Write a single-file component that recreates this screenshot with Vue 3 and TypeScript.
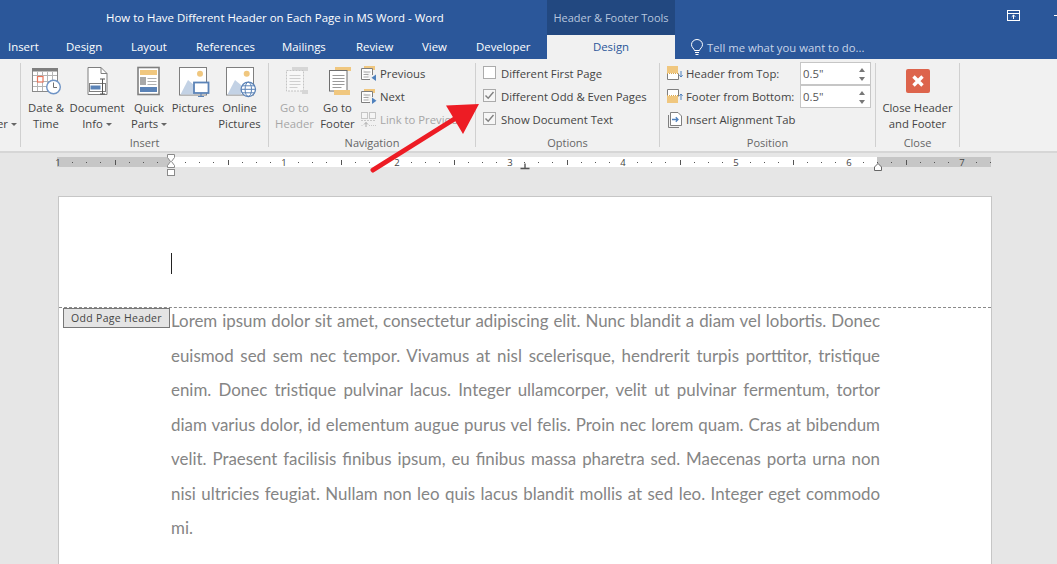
<script setup lang="ts">
const tabs: string[] = ['Insert', 'Design', 'Layout', 'References', 'Mailings', 'Review', 'View', 'Developer']

const INCH = 113
const ORIGIN = 171
interface Tick { x: number; kind: 'dot' | 'tall' | 'num'; label: string }
const ticks: Tick[] = []
for (let i = -8; i <= 58; i++) {
  if (i === 0) continue
  const x = ORIGIN + (i * INCH) / 8
  if (i % 8 === 0) ticks.push({ x, kind: 'num', label: String(Math.abs(i / 8)) })
  else if (i % 4 === 0) ticks.push({ x, kind: 'tall', label: '' })
  else ticks.push({ x, kind: 'dot', label: '' })
}

const lines: string[] = [
  'Lorem ipsum dolor sit amet, consectetur adipiscing elit. Nunc blandit a diam vel lobortis. Donec',
  'euismod sed sem nec tempor. Vivamus at nisl scelerisque, hendrerit turpis porttitor, tristique',
  'enim. Donec tristique pulvinar lacus. Integer ullamcorper, velit ut pulvinar fermentum, tortor',
  'diam varius dolor, id elementum augue purus vel felis. Proin nec lorem quam. Cras at bibendum',
  'velit. Praesent facilisis finibus ipsum, eu finibus massa pharetra sed. Maecenas porta urna non',
  'nisi ultricies feugiat. Nullam non leo quis lacus blandit mollis at sed leo. Integer eget commodo',
]
</script>

<template>
  <div class="app">
    <header class="titlebar">
      <div class="title">How to Have Different Header on Each Page in MS Word - Word</div>
      <div class="context">Header &amp; Footer Tools</div>
      <svg class="restore" width="14" height="12" viewBox="0 0 14 12">
        <rect x="0.5" y="0.5" width="12" height="10" fill="none" stroke="#fff" />
        <path d="M0 3.5H13M6.5 9V5M4.7 6.8L6.5 5L8.3 6.8" fill="none" stroke="#fff" />
      </svg>
      <div class="min"></div>
    </header>

    <nav class="tabs">
      <div v-for="t in tabs" :key="t" class="tab">{{ t }}</div>
      <div class="tab active">Design</div>
      <div class="tell">
        <svg width="14" height="17" viewBox="0 0 14 17">
          <path d="M4.5 11.5C4.2 9.5 1.5 8.5 1.5 5.7a5.3 5 0 0 1 11 0c0 2.8-2.7 3.8-3 5.8z" fill="none" stroke="#fff" />
          <path d="M5 13.5h4M5.5 15.5h3" stroke="#fff" />
        </svg>
        <span>Tell me what you want to do...</span>
      </div>
      <div class="tab">Si</div>
    </nav>

    <section class="ribbon">
      <div class="group g-cut">
        <div class="body cut-body"><span class="lbl">er<i class="caret"></i></span></div>
      </div>

      <div class="group g-insert">
        <div class="body large-grid">
          <div class="large">
            <svg class="ico" width="36" height="36" viewBox="0 0 36 36">
              <rect x="4.5" y="4.5" width="25" height="23" fill="#fff" stroke="#8a8a8a" />
              <rect x="4" y="4" width="26" height="3.5" fill="#7f7f7f" />
              <path d="M9.5 8v19M14.5 8v19M19.5 8v19M24.5 8v19M5 11.5h24M5 17.5h24M5 22.5h24" stroke="#b5b5b5" fill="none" />
              <rect x="9.5" y="12.5" width="5.5" height="5.5" fill="#fff" stroke="#e8745a" stroke-width="1.2" />
              <circle cx="25.5" cy="23" r="6.8" fill="#fff" stroke="#6f94c6" stroke-width="1.4" />
              <path d="M25.5 18.5V23.5H29" fill="none" stroke="#707070" />
            </svg>
            <span class="lbl">Date &amp;<br />Time</span>
          </div>
          <div class="large">
            <svg class="ico" width="36" height="36" viewBox="0 0 36 36">
              <path d="M9 3.5H22L28 9.5V30.5H9z" fill="#fff" stroke="#7f7f7f" />
              <path d="M22 3.5V9.5H28" fill="none" stroke="#7f7f7f" />
              <rect x="10.5" y="19.5" width="16" height="8" fill="#fff" stroke="#7f7f7f" />
              <rect x="11.5" y="21.5" width="10" height="4" fill="#5b83b7" />
              <path d="M21 15h5M23.5 15v15M21 30h5" fill="none" stroke="#555" />
            </svg>
            <span class="lbl">Document<br />Info<i class="caret"></i></span>
          </div>
          <div class="large">
            <svg class="ico" width="36" height="36" viewBox="0 0 36 36">
              <rect x="7" y="3.5" width="21" height="27" fill="#fff" stroke="#7f7f7f" stroke-width="1.6" />
              <rect x="9" y="6" width="17" height="5" fill="#f0c77f" />
              <rect x="9" y="13" width="6" height="8" fill="#a9a9a9" />
              <path d="M16.5 14.5h9M16.5 17.5h9M16.5 20.5h9" stroke="#b0b0b0" />
              <rect x="9" y="23" width="17" height="5" fill="#5b83b7" />
            </svg>
            <span class="lbl">Quick<br />Parts<i class="caret"></i></span>
          </div>
          <div class="large">
            <svg class="ico" width="36" height="36" viewBox="0 0 36 36">
              <rect x="4.5" y="3.5" width="27" height="27.5" fill="#fff" stroke="#7f7f7f" />
              <circle cx="25" cy="9.7" r="3" fill="#f0c77f" />
              <path d="M5.5 30.5L13 16L19 21V30.5z" fill="#c3d2e5" />
              <rect x="19" y="18.5" width="14.5" height="10.5" fill="#fff" stroke="#5b83b7" stroke-width="1.8" />
              <path d="M26 29v3M23 32.5h6" stroke="#5b83b7" stroke-width="1.2" />
            </svg>
            <span class="lbl">Pictures</span>
          </div>
          <div class="large">
            <svg class="ico" width="36" height="36" viewBox="0 0 36 36">
              <rect x="4.5" y="3.5" width="27" height="27.5" fill="#fff" stroke="#7f7f7f" />
              <circle cx="24.7" cy="9.7" r="3" fill="#f0c77f" />
              <path d="M5.5 30.5L13 16L19 21V30.5z" fill="#c3d2e5" />
              <circle cx="26.3" cy="25.3" r="7.2" fill="#fff" stroke="#5b83b7" stroke-width="1.3" />
              <ellipse cx="26.3" cy="25.3" rx="3.2" ry="7.2" fill="none" stroke="#5b83b7" />
              <path d="M19 25.3h14.6M20 21.8h12.6M20 28.8h12.6" stroke="#5b83b7" />
            </svg>
            <span class="lbl">Online<br />Pictures</span>
          </div>
        </div>
        <div class="glabel">Insert</div>
      </div>

      <div class="group g-nav">
        <div class="body nav-body">
          <div class="large nav-large off">
            <svg class="ico" width="36" height="36" viewBox="0 0 36 36">
              <rect x="15" y="3" width="16" height="4" fill="#d6d6d6" />
              <rect x="9.5" y="6.5" width="17" height="20.5" fill="#f7f7f7" stroke="#c4c4c4" stroke-dasharray="2 1" />
              <path d="M12.5 11.5h11M12.5 14.5h11M12.5 17.5h11M12.5 20.5h11M12.5 23.5h8" stroke="#cfcfcf" />
              <rect x="25" y="26" width="6" height="4" fill="#d6d6d6" />
            </svg>
            <span class="lbl">Go to<br />Header</span>
          </div>
          <div class="large nav-large">
            <svg class="ico" width="36" height="36" viewBox="0 0 36 36">
              <rect x="15" y="3" width="16" height="4" fill="#f0c77f" />
              <rect x="9.5" y="6.5" width="17.5" height="20.5" fill="#fff" stroke="#6f6f6f" />
              <path d="M12.5 11.5h12M12.5 14.5h12M12.5 17.5h12M12.5 20.5h12M12.5 23.5h9" stroke="#9a9a9a" />
              <rect x="14" y="26" width="16" height="5" fill="#f0c77f" />
            </svg>
            <span class="lbl">Go to<br />Footer</span>
          </div>
          <div class="rows nav-rows">
            <div class="row">
              <svg width="16" height="16" viewBox="0 0 16 16">
                <rect x="3" y="0" width="11" height="4" fill="#f0c77f" />
                <path d="M0.5 2.5H11.5V9M9 13.5H0.5V2.5" fill="#fff" stroke="#7f7f7f" />
                <path d="M2.5 6h7M2.5 8.5h5M2.5 11h5" stroke="#a5a5a5" />
                <path d="M15 8.5V15L10.5 11.7z" fill="#4f81bd" />
              </svg>
              <span class="lbl">Previous</span>
            </div>
            <div class="row">
              <svg width="16" height="16" viewBox="0 0 16 16">
                <rect x="3" y="0" width="11" height="4" fill="#f0c77f" />
                <path d="M0.5 2.5H11.5V8M9 13.5H0.5V2.5" fill="#fff" stroke="#7f7f7f" />
                <path d="M2.5 6h7M2.5 8.5h5M2.5 11h5" stroke="#a5a5a5" />
                <path d="M11 8.5V15L15.5 11.7z" fill="#4f81bd" />
              </svg>
              <span class="lbl">Next</span>
            </div>
            <div class="row off">
              <svg width="16" height="16" viewBox="0 0 16 16">
                <rect x="0.5" y="0.5" width="6" height="6" fill="#f5f5f5" stroke="#c6c6c6" />
                <rect x="8.5" y="0.5" width="6" height="6" fill="#f5f5f5" stroke="#c6c6c6" />
                <path d="M0 8.5h15" stroke="#c6c6c6" stroke-dasharray="2 1" />
                <path d="M0.5 13.5h2M8 13.5h7" stroke="#c6c6c6" stroke-dasharray="1 1" />
                <path d="M5 15V10.5M3 12.5l2-2 2 2" fill="none" stroke="#aaa" />
              </svg>
              <span class="lbl">Link to Previous</span>
            </div>
          </div>
        </div>
        <div class="glabel">Navigation</div>
      </div>

      <div class="group g-opt">
        <div class="body rows opt-rows">
          <div class="row check">
            <span class="box"></span>
            <span class="lbl">Different First Page</span>
          </div>
          <div class="row check">
            <span class="box on">
              <svg width="13" height="13" viewBox="0 0 13 13"><path d="M2.5 6.5L5.2 9.3L10.5 3" fill="none" stroke="#808080" stroke-width="1.4" /></svg>
            </span>
            <span class="lbl">Different Odd &amp; Even Pages</span>
          </div>
          <div class="row check">
            <span class="box on">
              <svg width="13" height="13" viewBox="0 0 13 13"><path d="M2.5 6.5L5.2 9.3L10.5 3" fill="none" stroke="#808080" stroke-width="1.4" /></svg>
            </span>
            <span class="lbl">Show Document Text</span>
          </div>
        </div>
        <div class="glabel">Options</div>
      </div>

      <div class="group g-pos">
        <div class="body pos-body">
          <div class="rows pos-rows">
            <div class="row">
              <svg width="16" height="16" viewBox="0 0 16 16">
                <rect x="0" y="0" width="11" height="7" fill="#f0c77f" />
                <path d="M0.5 7.5V13.5H11.5V7.5" fill="#fff" stroke="#7f7f7f" />
                <path d="M0 7.5h11" stroke="#d9a94f" stroke-dasharray="1 1" />
                <path d="M14 5v6M12.4 9.2L14 11l1.6-1.8" fill="none" stroke="#4f81bd" />
              </svg>
              <span class="lbl">Header from Top:</span>
            </div>
            <div class="row">
              <svg width="16" height="16" viewBox="0 0 16 16">
                <path d="M0.5 7.5V0.5H11.5V7.5" fill="#fff" stroke="#7f7f7f" />
                <rect x="0" y="7" width="11" height="7" fill="#f0c77f" />
                <path d="M0 6.5h11" stroke="#d9a94f" stroke-dasharray="1 1" />
                <path d="M14 11V5M12.4 6.8L14 5l1.6 1.8" fill="none" stroke="#4f81bd" />
              </svg>
              <span class="lbl">Footer from Bottom:</span>
            </div>
            <div class="row">
              <svg width="16" height="16" viewBox="0 0 16 16">
                <path d="M3.5 0.5H11L14.5 4V13.5H3.5z" fill="#fff" stroke="#7f7f7f" />
                <path d="M1.5 3v12.5H12" fill="none" stroke="#7f7f7f" />
                <path d="M5 7.5h6M8.8 5.3L11 7.5L8.8 9.7" fill="none" stroke="#4f81bd" stroke-width="1.3" />
              </svg>
              <span class="lbl">Insert Alignment Tab</span>
            </div>
          </div>
          <div class="spins">
            <div class="spin"><span class="val">0.5"</span><i class="up"></i><i class="down"></i></div>
            <div class="spin"><span class="val">0.5"</span><i class="up"></i><i class="down"></i></div>
          </div>
        </div>
        <div class="glabel">Position</div>
      </div>

      <div class="group g-close">
        <div class="body close-body">
          <div class="large close-large">
            <svg class="ico" width="24" height="24" viewBox="0 0 24 24">
              <rect width="24" height="24" rx="2" fill="#dd644c" />
              <path d="M7.5 7.5L16.5 16.5M16.5 7.5L7.5 16.5" stroke="#fff" stroke-width="3.4" />
            </svg>
            <span class="lbl">Close Header<br />and Footer</span>
          </div>
        </div>
        <div class="glabel">Close</div>
      </div>
    </section>

    <main class="workspace">
      <svg class="ruler" width="1057" height="23" viewBox="0 153 1057 23">
        <rect x="57" y="157" width="114" height="10" fill="#c6c6c6" />
        <rect x="171" y="157" width="706" height="10" fill="#fff" />
        <rect x="877" y="157" width="114" height="10" fill="#c6c6c6" />
        <g v-for="t in ticks" :key="t.x">
          <text v-if="t.kind === 'num'" :x="t.x" y="165.5" class="rnum">{{ t.label }}</text>
          <rect v-else-if="t.kind === 'tall'" :x="Math.round(t.x)" y="160" width="1" height="5" fill="#555" />
          <rect v-else :x="Math.round(t.x)" y="162" width="1" height="1" fill="#555" />
        </g>
        <path d="M167.5 154.5H174.5V157.5L171.5 161.5L174.5 165.5V167.5H167.5V165.5L170.5 161.5L167.5 157.5z" fill="#fff" stroke="#8a8a8a" />
        <rect x="167.5" y="169.5" width="7" height="6" fill="#fff" stroke="#8a8a8a" />
        <path d="M525 163.5V168M520.5 168.5H529.5" stroke="#555" stroke-width="1.4" fill="none" />
        <path d="M874.5 170.5V167L878 163.5L881.5 167V170.5z" fill="#fff" stroke="#666" />
      </svg>

      <article class="page">
        <div class="head-area"><span class="caret-line"></span></div>
        <div class="tag">Odd Page Header</div>
        <div class="text">
          <div v-for="l in lines" :key="l" class="line">{{ l }}</div>
          <div class="line last">mi.</div>
        </div>
      </article>
    </main>

    <svg class="arrow" width="112" height="70" viewBox="370 103 112 70">
      <path d="M373 170L456 118" stroke="#ed1c24" stroke-width="5" stroke-linecap="round" />
      <path d="M479 104L446 105.5L463 134z" fill="#ed1c24" />
    </svg>
  </div>
</template>

<style scoped>
.app {
  position: relative;
  width: 1057px;
  height: 564px;
  overflow: hidden;
  display: flex;
  flex-direction: column;
  font-family: "Open Sans", "Liberation Sans", sans-serif;
  font-size: 11.3px;
  color: #444;
  background: #e6e6e6;
}
.titlebar {
  height: 35px;
  flex: none;
  background: #2b579a;
  display: flex;
}
.title {
  width: 547px;
  flex: none;
  box-sizing: border-box;
  padding-left: 106px;
  line-height: 35px;
  color: #fff;
  font-size: 11.44px;
  white-space: nowrap;
}
.context {
  width: 128px;
  flex: none;
  background: #224880;
  color: #b7c6de;
  text-align: center;
  line-height: 35px;
  font-size: 11px;
  white-space: nowrap;
}
.restore {
  flex: none;
  margin: 10px 0 0 332px;
}
.min {
  width: 8px;
  flex: none;
  height: 1px;
  background: #fff;
  margin: 15px 0 0 33px;
}
.tabs {
  height: 24px;
  flex: none;
  background: #2b579a;
  display: grid;
  grid-template-columns: 58px 65px 65px 86px 74px 66px 54px 79px 128px 374px 8px;
  align-items: stretch;
}
.tab {
  padding-left: 8px;
  color: #fff;
  line-height: 24px;
  font-size: 11.4px;
  white-space: nowrap;
}
.tab.active {
  padding: 0;
  background: #f1f1f1;
  color: #2b579a;
  text-align: center;
}
.tell {
  display: flex;
  align-items: center;
  gap: 3px;
  padding-left: 15px;
  color: #c9d5e8;
  font-size: 11.3px;
  white-space: nowrap;
}
.ribbon {
  height: 92px;
  flex: none;
  box-sizing: border-box;
  padding: 4px 0;
  background: #f1f1f1;
  display: flex;
}
.group {
  box-sizing: border-box;
  display: flex;
  flex-direction: column;
  border-right: 1px solid #d0d0d0;
}
.g-cut { width: 21px; }
.g-insert { width: 248px; }
.g-nav { width: 207px; }
.g-opt { width: 184px; }
.g-pos { width: 216px; }
.g-close { width: 84px; }
.body {
  height: 72px;
  flex: none;
}
.glabel {
  height: 16px;
  margin-bottom: -4px;
  line-height: 16px;
  text-align: center;
  color: #666;
  font-size: 11px;
}
.lbl {
  white-space: nowrap;
}
.cut-body {
  display: flex;
  justify-content: flex-end;
  padding: 53px 3px 0 0;
  box-sizing: border-box;
  line-height: 16px;
}
.large-grid {
  display: grid;
  grid-template-columns: 50px 52px 52px 36px 57px;
}
.large {
  display: flex;
  flex-direction: column;
  align-items: center;
  text-align: center;
  line-height: 16px;
}
.ico {
  flex: none;
  margin-top: 1px;
  margin-bottom: 0;
}
.nav-body {
  display: flex;
}
.nav-large {
  width: 43px;
  flex: none;
}
.nav-large:first-child {
  margin-left: 4px;
}
.nav-rows {
  margin-left: 2px;
}
.off,
.off .lbl {
  color: #a6a6a6;
}
.rows {
  display: flex;
  flex-direction: column;
  margin-top: -1px;
}
.row {
  height: 23px;
  flex: none;
  display: flex;
  align-items: center;
  gap: 3px;
  white-space: nowrap;
}
.opt-rows {
  padding-left: 7px;
}
.g-opt .body {
  height: 73px;
}
.g-pos .pos-rows,
.g-nav .nav-rows {
  height: 73px;
}
.check {
  gap: 5px;
}
.box {
  box-sizing: border-box;
  width: 13px;
  height: 13px;
  flex: none;
  margin-top: -2px;
  background: #fff;
  border: 1px solid #ababab;
  display: flex;
  align-items: center;
  justify-content: center;
}
.box.on {
  background: #f6f6f6;
}
.box svg {
  flex: none;
}
.pos-body {
  display: flex;
  justify-content: space-between;
  padding: 0 4px 0 7px;
  box-sizing: border-box;
}
.pos-rows {
  width: 133px;
}
.spins {
  display: flex;
  flex-direction: column;
  margin-top: -1px;
}
.spin {
  position: relative;
  box-sizing: border-box;
  width: 71px;
  height: 23px;
  background: #fff;
  border: 1px solid #c6c6c6;
  line-height: 21px;
  padding-left: 2px;
  color: #555;
  font-size: 11.3px;
}
.spin i {
  position: absolute;
  right: 5px;
  width: 0;
  height: 0;
  border-left: 3px solid transparent;
  border-right: 3px solid transparent;
}
.up {
  top: 5px;
  border-bottom: 4px solid #777;
}
.down {
  bottom: 3px;
  border-top: 4px solid #777;
}
.close-large .ico {
  margin: 6px 0 7px;
}
.caret {
  display: inline-block;
  width: 0;
  height: 0;
  margin-left: 3px;
  vertical-align: 2px;
  border-left: 3px solid transparent;
  border-right: 3px solid transparent;
  border-top: 3px solid #666;
}
.workspace {
  flex: 1;
  position: relative;
  overflow: hidden;
  border-top: 2px solid #d6d6d6;
  background: #e6e6e6;
}
.ruler {
  display: block;
}
.rnum {
  font-family: "Open Sans", sans-serif;
  font-size: 9.5px;
  fill: #444;
  text-anchor: middle;
}
.page {
  position: relative;
  box-sizing: border-box;
  width: 934px;
  margin: 20px 0 0 58px;
  height: 500px;
  background: #fff;
  border: 1px solid #c6c6c6;
  padding-left: 112px;
}
.head-area {
  height: 111px;
  margin-left: -112px;
  padding: 56px 0 0 112px;
  box-sizing: border-box;
  border-bottom: 1px dashed #8a8a8a;
}
.caret-line {
  display: block;
  width: 1px;
  height: 21px;
  background: #222;
}
.tag {
  position: absolute;
  left: 4px;
  top: 111px;
  box-sizing: border-box;
  width: 107px;
  height: 20px;
  background: #e4e4e4;
  border: 1px solid #777;
  text-align: center;
  line-height: 18px;
  font-size: 10.5px;
  letter-spacing: 0.3px;
  color: #444;
}
.text {
  width: 709px;
  margin-top: -4px;
  font-family: Lato, "Open Sans", sans-serif;
  font-size: 16.9px;
  line-height: 34.5px;
  color: #858585;
}
.line {
  text-align: justify;
  text-align-last: justify;
  white-space: nowrap;
}
.line.last {
  text-align-last: left;
}
.arrow {
  position: absolute;
  left: 370px;
  top: 103px;
}
</style>

<style>
html,
body {
  margin: 0;
  background: #e6e6e6;
}
</style>
